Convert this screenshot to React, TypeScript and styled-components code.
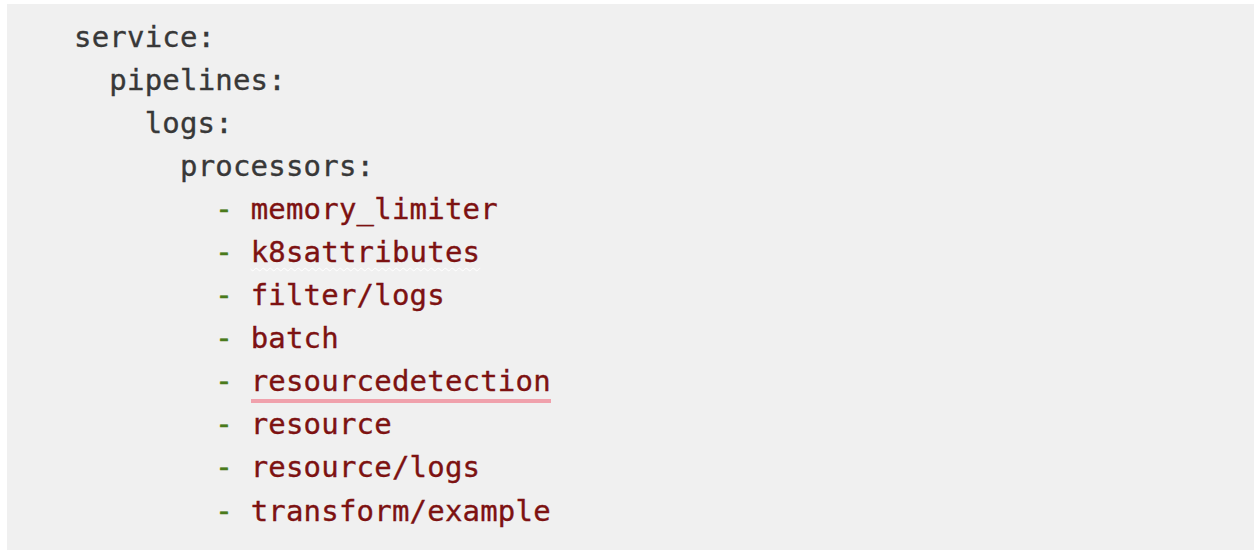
import React from "react";
import styled, { createGlobalStyle } from "styled-components";

const Global = createGlobalStyle`
  html, body { margin: 0; padding: 0; background: #ffffff; }
`;

const Page = styled.div`
  padding: 4px 6px 4px 7px;
`;

const CodeBlock = styled.pre`
  margin: 0;
  background: #f0f0f0;
  height: 546px;
  box-sizing: border-box;
  padding: 11.5px 0 0 67px;
  font-family: "DejaVu Sans Mono", "Liberation Mono", monospace;
  font-size: 29px;
  letter-spacing: 0.2px;
  line-height: 43.1px;
  color: #383838;
  -webkit-text-stroke: 0.35px currentColor;
  white-space: pre;
`;

const Line = styled.div`
  height: 43.1px;
`;

const Dash = styled.span`
  color: #4a7a1c;
  -webkit-text-stroke: 0.6px currentColor;
`;

const Value = styled.span<{ $mark?: "wavy" | "error" }>`
  position: relative;
  color: #7d1212;
  text-decoration: ${(p) => (p.$mark === "wavy" ? "underline wavy #ffffff" : "none")};
  text-decoration-thickness: 1px;
  text-underline-offset: 5px;
  ${(p) =>
    p.$mark === "error"
      ? `&::after {
          content: "";
          position: absolute;
          left: 0;
          right: 0;
          top: 35px;
          height: 4px;
          background: #f0a1ac;
        }`
      : ""}
`;

const keys = [
  { indent: 0, text: "service:" },
  { indent: 2, text: "pipelines:" },
  { indent: 4, text: "logs:" },
  { indent: 6, text: "processors:" },
];

const items: { text: string; mark?: "wavy" | "error" }[] = [
  { text: "memory_limiter" },
  { text: "k8sattributes", mark: "wavy" },
  { text: "filter/logs" },
  { text: "batch" },
  { text: "resourcedetection", mark: "error" },
  { text: "resource" },
  { text: "resource/logs" },
  { text: "transform/example" },
];

export default function App() {
  return (
    <>
      <Global />
      <Page>
        <CodeBlock>
          {keys.map((k) => (
            <Line key={k.text}>
              {" ".repeat(k.indent)}
              {k.text}
            </Line>
          ))}
          {items.map((it) => (
            <Line key={it.text}>
              {"        "}
              <Dash>-</Dash>{" "}
              <Value $mark={it.mark}>{it.text}</Value>
            </Line>
          ))}
        </CodeBlock>
      </Page>
    </>
  );
}
